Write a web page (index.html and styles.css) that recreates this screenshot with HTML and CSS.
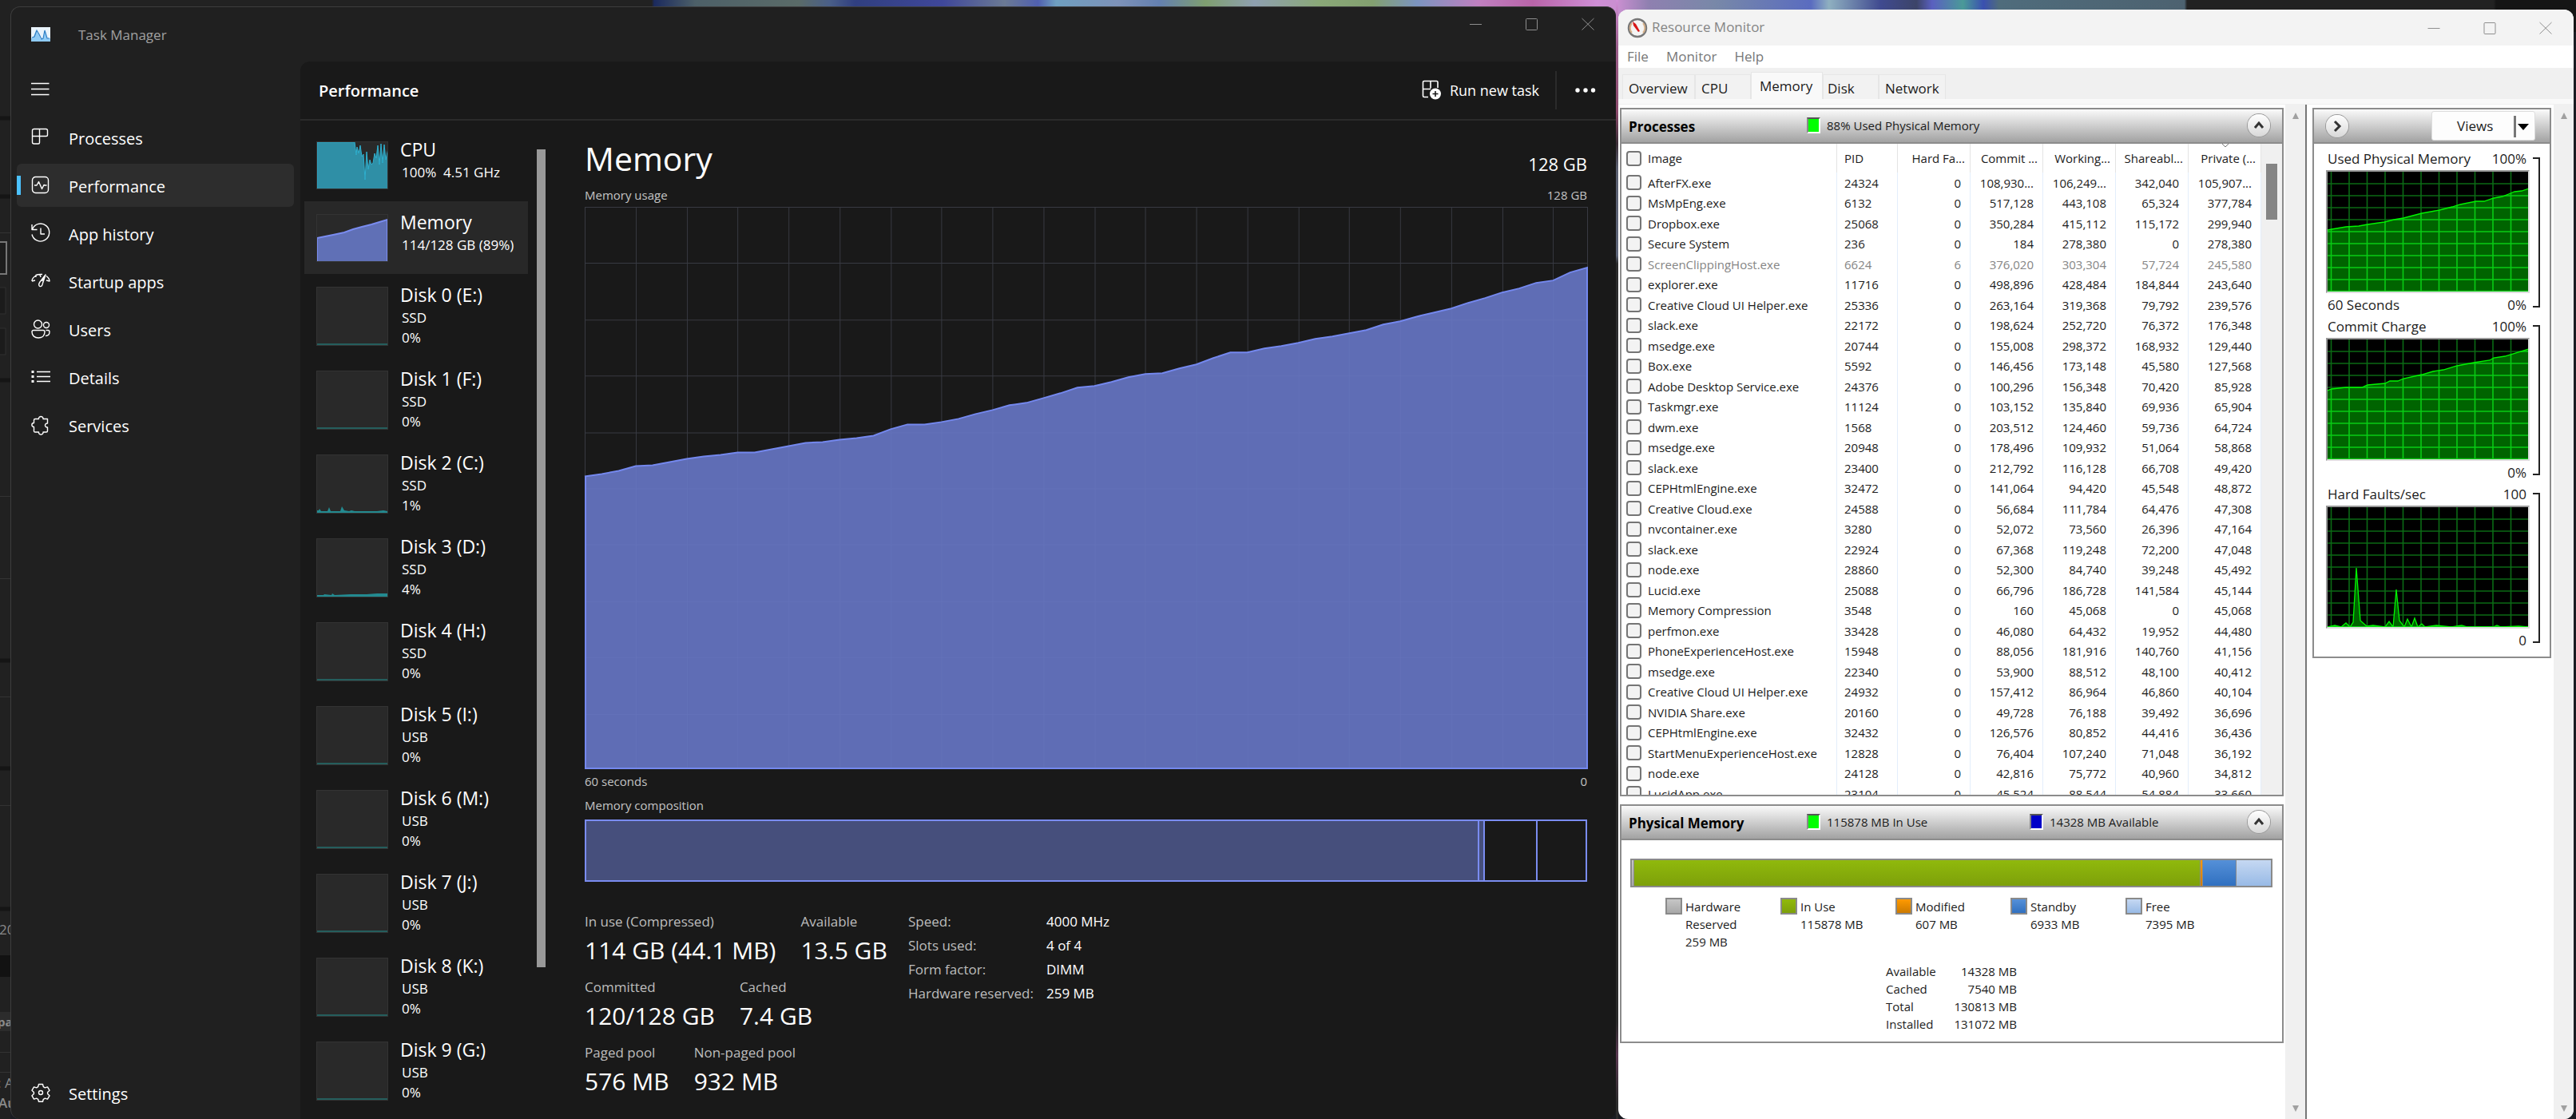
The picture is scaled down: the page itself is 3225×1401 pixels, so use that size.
FILE: index.html
```html
<!DOCTYPE html>
<html lang="en">
<head>
<meta charset="utf-8">
<title>Task Manager and Resource Monitor</title>
<link rel="stylesheet" href="styles.css">
</head>
<body>
<div class="desktop">
  <div class="behind" aria-hidden="true">
    <svg class="behind-art" width="15" height="1401" viewBox="0 0 15 1401">
      <rect width="15" height="1401" fill="#212121"/>
      <path d="M0 148h15M0 246h15M0 476h15M0 827h15M0 962h15M0 1138h15" stroke="#151515" stroke-width="5"/>
      <rect y="1196" width="15" height="27" fill="#121212"/>
      <rect y="1267" width="15" height="24" fill="#2c2c2c"/>
      <path d="M0 291.500h15M0 621.500h15M0 724.500h15M0 872.500h15M0 1008.500h15M0 1317.500h15M0 1342.500h15" stroke="#333"/>
      <path d="M-2 303h10v40H-2z" fill="#1d1d1d" stroke="#777" stroke-width="2"/>
      <path d="M-2 360h9v33h-9zM-2 411h9v33h-9z" fill="#1b1b1b" stroke="#303030"/>
      <g fill="#8a8a8a" font-family="Open Sans, sans-serif" font-size="17">
        <text x="-1" y="1170">20</text>
        <text x="-3" y="1285" font-weight="700" font-size="15">pa</text>
        <text x="-3" y="1362">: A</text>
        <text x="-2" y="1387" font-weight="600">Au</text>
      </g>
    </svg>
  </div>

  <section class="taskmgr" aria-label="Task Manager">
    <header class="tm-titlebar">
      <svg class="tm-logo" width="24" height="18" viewBox="0 0 24 18"><rect width="24" height="18" fill="#e9f3fb"/><path d="M0 14l3-2 3-8 4 6 2 5 3-1 2-10 3 10 4 0v4H0z" fill="#8fcbf5"/><path d="M1 13l3-1 3-8 3 5 3 6 2-1 2-10 3 10 3 0" fill="none" stroke="#2f7fc4" stroke-width="1.200"/></svg>
      <span class="tm-title">Task Manager</span>
      <div class="tm-controls">
        <button aria-label="Minimize"><svg width="16" height="16" viewBox="0 0 16 16"><path d="M0 8.500h15"/></svg></button>
        <button aria-label="Maximize"><svg width="16" height="16" viewBox="0 0 16 16"><rect x=".5" y="1.500" width="14" height="14" rx="1"/></svg></button>
        <button aria-label="Close"><svg width="16" height="16" viewBox="0 0 16 16"><path d="M.5 1l15 14.500M15.500 1l-15 14.500"/></svg></button>
      </div>
    </header>

    <nav class="tm-nav">
      <button class="nav-item" aria-label="Open navigation"><svg viewBox="0 0 24 24"><path d="M0 4.500h22.500M0 11.500h22.500M0 18.500h22.500"/></svg></button>
      <button class="nav-item"><svg viewBox="0 0 24 24"><path d="M3.500 1.500h15a2 2 0 0 1 2 2v5.500a1.500 1.500 0 0 1-1.500 1.500H1.500M3.500 1.500a2 2 0 0 0-2 2V18a2 2 0 0 0 2 2H9a1.500 1.500 0 0 0 1.500-1.500v-17"/></svg>Processes</button>
      <button class="nav-item selected"><svg viewBox="0 0 24 24"><rect x="1.500" y="1.500" width="20" height="20" rx="4"/><path d="M4 12h3l2.500-4.500 4 9 2.500-5 1 .5h2.500"/></svg>Performance</button>
      <button class="nav-item"><svg viewBox="0 0 24 24"><path d="M1 1v6.500h6.500M1.500 7A11 11 0 1 1 1 13.500M12 5.500V13h5"/></svg>App history</button>
      <button class="nav-item"><svg viewBox="0 0 24 24"><path d="M1 12c0-3 2.500-5.500 5-7M6 7V4.500C9 3 12 3.500 14 3.500M1 12l4-1M19 5.500c2 1.500 4 3.500 4 6.500l-4-1M18 4l-4.500 8M18 4l-7 9c-2 3-1.500 5 0 5.500 2 .5 3-1 3.500-4L18 4zM11 4l1 3"/></svg>Startup apps</button>
      <button class="nav-item"><svg viewBox="0 0 24 24"><circle cx="8.500" cy="6" r="5"/><circle cx="19" cy="7" r="3.500"/><path d="M3 13.500h12a2 2 0 0 1 2 2c0 5-3.500 7.500-8 7.500S1 20.500 1 15.500a2 2 0 0 1 2-2zM18.500 13.500H21a2 2 0 0 1 2 2c0 3-1.500 5-5 5"/></svg>Users</button>
      <button class="nav-item"><svg viewBox="0 0 24 24"><path d="M7 5.500h17M7 11.500h17M7 17.500h17"/><path d="M.5 5.500h3M.5 11.500h3M.5 17.500h3" stroke-width="3"/></svg>Details</button>
      <button class="nav-item"><svg viewBox="0 0 24 24"><path d="M5 4.500h4.500c-.5-4 6-4 5.500 0h5.500v5.500c-4-.5-4 5.500 0 5v4.500a1.500 1.500 0 0 1-1.500 1.500H15c.5 4-6 4-5.500 0H5A1.500 1.500 0 0 1 3.500 19v-4.500c-3.500 0-3.500-5 0-5V6A1.500 1.500 0 0 1 5 4.500z"/></svg>Services</button>
      <button class="nav-item settings"><svg viewBox="0 0 24 24"><circle cx="12" cy="12" r="2.500"/><path d="M9.500 1.500h5l.8 3.200 2 1.200 3.200-1 2.500 4.300-2.400 2.200v2.200l2.400 2.200-2.500 4.300-3.200-1-2 1.200-.8 3h-5l-.8-3-2-1.200-3.200 1L1 15.800l2.400-2.200v-2.200L1 9.200l2.500-4.300 3.200 1 2-1.200z"/></svg>Settings</button>
    </nav>

    <main class="tm-main">
      <header class="tm-header">
        <h1>Performance</h1>
        <button class="run-task"><svg width="26" height="26" viewBox="0 0 26 26"><path d="M8 21.500H3A1.500 1.500 0 0 1 1.500 20V3A1.500 1.500 0 0 1 3 1.500h15.500A1.500 1.500 0 0 1 20 3v7M1.500 11.500H11M11 1.500v9" fill="none" stroke="#fff" stroke-width="1.600"/><circle cx="17" cy="17.500" r="7" fill="#fff"/><path d="M17 14v7M13.500 17.500h7" stroke="#191919" stroke-width="1.600"/></svg>Run new task</button>
        <button class="more" aria-label="More options"><svg width="26" height="8" viewBox="0 0 26 8" fill="#fff"><circle cx="3" cy="4" r="2.700"/><circle cx="13" cy="4" r="2.700"/><circle cx="22.500" cy="4" r="2.700"/></svg></button>
      </header>
      <div class="tm-body">
        <div class="device-scroll">
          <ul class="devices" id="devices"></ul>
          <div class="device-track"><div class="device-thumb"></div></div>
        </div>
        <section class="detail">
          <div class="detail-title"><h2>Memory</h2><span>128 GB</span></div>
          <div class="caption caption-top"><span>Memory usage</span><span>128 GB</span></div>
          <svg class="usage" id="usage" viewBox="0 0 1254 703" preserveAspectRatio="none" role="img" aria-label="Memory usage"></svg>
          <div class="caption caption-time"><span>60 seconds</span><span>0</span></div>
          <div class="caption caption-comp"><span>Memory composition</span></div>
          <div class="composition">
            <div class="used" style="width:89.400%"></div>
            <div class="used" style="width:0.500%"></div>
            <div style="width:5.300%"></div>
            <div class="free"></div>
          </div>
          <div class="stats">
            <div class="stat-left">
              <dl class="stat-row"><div><dt>In use (Compressed)</dt><dd>114 GB (44.1 MB)</dd></div><div><dt>Available</dt><dd>13.5 GB</dd></div></dl>
              <dl class="stat-row"><div><dt>Committed</dt><dd>120/128 GB</dd></div><div><dt>Cached</dt><dd>7.4 GB</dd></div></dl>
              <dl class="stat-row"><div><dt>Paged pool</dt><dd>576 MB</dd></div><div><dt>Non-paged pool</dt><dd>932 MB</dd></div></dl>
            </div>
            <dl class="specs">
              <dt>Speed:</dt><dd>4000 MHz</dd>
              <dt>Slots used:</dt><dd>4 of 4</dd>
              <dt>Form factor:</dt><dd>DIMM</dd>
              <dt>Hardware reserved:</dt><dd>259 MB</dd>
            </dl>
          </div>
        </section>
      </div>
    </main>
  </section>

  <div class="gap" aria-hidden="true"></div>

  <section class="resmon" aria-label="Resource Monitor">
    <header class="rm-titlebar">
      <svg width="26" height="26" viewBox="0 0 26 26"><circle cx="13" cy="13" r="11" fill="#f4f4f4" stroke="#777" stroke-width="2.500"/><path d="M6 7a9 9 0 0 0 0 12M20 7a9 9 0 0 1 0 12" fill="none" stroke="#d9b38c" stroke-width="2"/><path d="M7 5l4 3 5 9-2 1-6-8z" fill="#d81818"/></svg>
      <span class="rm-title">Resource Monitor</span>
      <div class="rm-controls">
        <button aria-label="Minimize"><svg width="16" height="16" viewBox="0 0 16 16"><path d="M.5 8.500h15"/></svg></button>
        <button aria-label="Maximize"><svg width="16" height="16" viewBox="0 0 16 16"><rect x="1" y="1.500" width="14" height="14" rx="1"/></svg></button>
        <button aria-label="Close"><svg width="16" height="16" viewBox="0 0 16 16"><path d="M.5 1l15 14.500M15.500 1l-15 14.500"/></svg></button>
      </div>
    </header>
    <div class="rm-menu"><button>File</button><button>Monitor</button><button>Help</button></div>
    <div class="rm-tabs" role="tablist">
      <button role="tab" class="tab tab-overview">Overview</button>
      <button role="tab" class="tab tab-cpu">CPU</button>
      <button role="tab" class="tab tab-memory" aria-selected="true">Memory</button>
      <button role="tab" class="tab tab-disk">Disk</button>
      <button role="tab" class="tab tab-network">Network</button>
    </div>
    <div class="rm-strip"></div>
    <div class="rm-body">
      <div class="rm-left">
        <section class="panel processes">
          <header class="panel-head">
            <h2>Processes</h2>
            <span class="meter"><i class="box green"></i>88% Used Physical Memory</span>
            <button class="round" aria-label="Collapse"><svg width="28" height="28" viewBox="0 0 28 28"><path d="M9 17l5-6 5 6"/></svg></button>
          </header>
          <div class="table-wrap">
            <table>
              <colgroup><col><col class="w-pid"><col class="w-num"><col class="w-num"><col class="w-num"><col class="w-num"><col class="w-num"></colgroup>
              <thead><tr><th><label><input type="checkbox">Image</label></th><th>PID</th><th>Hard Fa...</th><th>Commit ...</th><th>Working...</th><th>Shareabl...</th><th>Private (...<svg class="sort" width="10" height="5" viewBox="0 0 10 5"><path d="M1 0l4 4 4-4" fill="none" stroke="#777"/></svg></th></tr></thead>
              <tbody id="rows"></tbody>
            </table>
            <div class="table-track"><div class="table-thumb"></div></div>
          </div>
        </section>
        <section class="panel physical">
          <header class="panel-head">
            <h2>Physical Memory</h2>
            <span class="meter"><i class="box green"></i>115878 MB In Use</span>
            <span class="meter meter-2"><i class="box blue"></i>14328 MB Available</span>
            <button class="round" aria-label="Collapse"><svg width="28" height="28" viewBox="0 0 28 28"><path d="M9 17l5-6 5 6"/></svg></button>
          </header>
          <div class="memory-bar">
            <div class="hw" style="width:0.200%"></div><div class="inuse" style="width:88.700%"></div><div class="modified" style="width:0.400%"></div><div class="standby" style="width:5.200%"></div><div class="free-mem"></div>
          </div>
          <ul class="legend">
            <li><i class="hw"></i><span>Hardware<br>Reserved<br>259 MB</span></li>
            <li><i class="inuse"></i><span>In Use<br>115878 MB</span></li>
            <li><i class="modified"></i><span>Modified<br>607 MB</span></li>
            <li><i class="standby"></i><span>Standby<br>6933 MB</span></li>
            <li><i class="free-mem"></i><span>Free<br>7395 MB</span></li>
          </ul>
          <dl class="summary">
            <dt>Available</dt><dd>14328 MB</dd>
            <dt>Cached</dt><dd>7540 MB</dd>
            <dt>Total</dt><dd>130813 MB</dd>
            <dt>Installed</dt><dd>131072 MB</dd>
          </dl>
        </section>
      </div>
      <div class="scrollbar"><svg viewBox="0 0 10 8"><path d="M5 0l4 8H1z"/></svg><svg viewBox="0 0 10 8"><path d="M5 8L1 0h8z"/></svg></div>
      <aside class="rm-right">
        <section class="panel">
          <header class="panel-head side-head">
            <button class="round" aria-label="Hide graphs"><svg width="28" height="28" viewBox="0 0 28 28"><path d="M11 8l6 6-6 6"/></svg></button>
            <button class="views"><span>Views</span><svg width="24" height="28" viewBox="0 0 24 28"><path d="M2.500 1v27" stroke="#777" stroke-width="3"/><path d="M6 11h14l-7 8z" fill="#000"/></svg></button>
          </header>
          <div class="graphs" id="graphs"></div>
        </section>
      </aside>
      <div class="scrollbar"><svg viewBox="0 0 10 8"><path d="M5 0l4 8H1z"/></svg><svg viewBox="0 0 10 8"><path d="M5 8L1 0h8z"/></svg></div>
    </div>
  </section>
</div>
<script src="app.js"></script>
</body>
</html>
```
FILE: styles.css
```css
* { box-sizing: border-box; margin: 0; padding: 0; }
body { font-family: "Open Sans", "Noto Sans", sans-serif; background: #1c1c1c; }
button { font: inherit; color: inherit; background: none; border: 0; }
ul { list-style: none; }

.desktop {
  display: grid;
  grid-template-columns: 13px 2010fr 3px 1196fr;
  min-height: 100vh;
  padding-right: 3px;
  background:
    linear-gradient(90deg, #222 25.3%, #1b2a5e 25.4%, #4d6068 27%, #5a6b68 31%, #4a5f88 32.2%, #303f80 33.2%, #3f479a 36.6%, #6b7a94 39%, #5060b0 40.3%, #6f9fc0 41%, #7d92b8 43.4%, #6480b0 45%, #7f9f70 46.8%, #8fa0b0 48.7%, #8aa878 51.2%, #83a070 53.3%, #7c95c0 55%, #c080c0 57.4%, #b864a8 59.5%, #cf8fd6 62%, #c98fd0 62.8%, #8f80b0 64%, #7888a8 66.6%, #5a6cc0 70.3%, #8fb0c0 71%, #404a90 73%, #3c4468 74.400%, #5a60c0 75%, #4a9a98 76.2%, #3a50b0 77%, #4f6c7c 77.6%, #4d6270 84.8%, #222 84.9%, #222 96.8%, #151515 96.9%) top / 100% 40px no-repeat,
    #1a1c22;
}
.behind { overflow: hidden; }
.behind-art { display: block; }
.gap { background: linear-gradient(#cf8fd6 0, #9c5f8c 60px, #8b4a6c 140px, #3c2f38 180px, #5a5f70 210px, #5c6478 320px, #2c2c2c 330px, #3a3d48 900px, #2c2c2c 970px, #2c2c2c 1280px, #5a3a52 1320px, #2c2c2c 1380px); }

/* Task Manager */
.taskmgr {
  display: grid;
  grid-template: 68px 1fr / 362px 1fr;
  margin-top: 8px;
  border: 1px solid #3d3d3d;
  border-right: 0;
  border-bottom: 0;
  border-radius: 12px;
  background: #202020;
  color: #fff;
  overflow: hidden;
}
.tm-titlebar { grid-column: 1 / -1; display: flex; align-items: center; padding-left: 25px; }
.tm-title { margin-left: 35px; font-size: 17px; color: #a0a0a0; }
.tm-controls { display: flex; align-self: flex-start; margin-left: auto; }
.tm-controls button { width: 70px; height: 41px; display: grid; place-items: center; }
.tm-controls svg, .rm-controls svg { fill: none; stroke: #8f8f8f; stroke-width: 1; }

.tm-nav { display: flex; flex-direction: column; gap: 6px; padding: 8px 8px 6px 7px; }
.nav-item { display: flex; align-items: center; gap: 23px; height: 54px; padding: 3px 18px 0; border-radius: 6px; font-size: 20px; text-align: left; }
.nav-item svg { flex: none; width: 24px; height: 24px; margin-bottom: 3px; fill: none; stroke: #fff; stroke-width: 1.4; stroke-linejoin: round; overflow: visible; }
.nav-item.selected { background: linear-gradient(#4cc2ff, #4cc2ff) left center / 5px 24px no-repeat, #2d2d2d; }
.nav-item.settings { margin-top: auto; }

.tm-main { display: flex; flex-direction: column; background: #191919; border-top-left-radius: 12px; }
.tm-header { display: flex; align-items: center; height: 74px; padding-left: 23px; border-bottom: 2px solid #2b2b2b; font-size: 18px; }
.tm-header h1 { font-size: 20px; font-weight: 600; margin-right: auto; }
.run-task { display: flex; align-items: center; gap: 9px; height: 48px; padding-right: 20px; border-right: 2px solid #2b2b2b; }
.more { padding: 0 25px 0 23px; display: flex; }

.tm-body { flex: 1; display: flex; }
.device-scroll { flex: none; display: flex; width: 316px; padding-left: 5px; }
.devices { width: 280px; padding-top: 10px; }
.device { display: flex; gap: 15px; height: 105px; padding: 10px 0 0 15px; }
.device.short { height: 91px; }
.device.selected { background: #282828; }
.device svg { flex: none; margin-top: 6px; width: 90px; height: 74px; border: 1px solid #333; background: #292929; }
.device.short svg { height: 60px; }
.device p { font-size: 17px; line-height: 25px; padding-left: 2px; white-space: nowrap; }
.device .name { font-size: 23px; line-height: 32px; padding-left: 0; }
.device-track { margin-left: 3px; width: 28px; padding: 36px 8px 0; }
.device-thumb { width: 11px; height: 1024px; background: #999; }

.detail { flex: 1; display: flex; flex-direction: column; min-width: 0; padding: 17px 36px 23px 40px; }
.detail-title { display: flex; justify-content: space-between; line-height: 60px; }
.detail-title h2 { font-size: 41px; font-weight: 400; }
.detail-title span { font-size: 22px; padding-top: 7px; line-height: 60px; height: 60px; }
.caption { display: flex; justify-content: space-between; font-size: 15px; line-height: 24px; color: #c4c4c4; }
.caption-top { margin: 4px 0 3px; }
.caption-time { margin-top: 3px; }
.caption-comp { margin: 6px 0; }
.usage { flex: 1 1 0; min-height: 300px; width: 100%; overflow: visible; }
.composition { display: flex; height: 78px; border: 2px solid #7a8cf0; }
.composition div { border-right: 2px solid #7a8cf0; }
.composition .used { background: #464f7c; }
.composition .free { flex: 1; border: 0; }
.stats { display: flex; margin-top: 38px; }
.stat-left { width: 405px; display: flex; flex-direction: column; gap: 10px; }
.stat-row { display: flex; gap: 31px; white-space: nowrap; }
.stat-row dt { font-size: 17px; line-height: 24px; color: #bdbdbd; }
.stat-row dd { font-size: 30px; line-height: 48px; }
.specs { display: grid; grid-template-columns: 173px auto; font-size: 17px; line-height: 30px; align-content: start; margin-top: -3px; white-space: nowrap; }
.specs dt { color: #bdbdbd; }

/* Resource Monitor */
.resmon { display: flex; flex-direction: column; margin-top: 12px; background: #fff; border-radius: 12px; overflow: hidden; font-size: 15px; color: #1c1c1c; }
.rm-titlebar { display: flex; align-items: center; height: 45px; padding-left: 11px; background: #f3f3f3; font-size: 17px; color: #858585; }
.rm-title { margin-left: 5px; padding-bottom: 2px; }
.rm-controls { display: flex; margin-left: auto; }
.rm-controls button { width: 70px; height: 42px; display: grid; place-items: center; }
.rm-menu { display: flex; gap: 22px; height: 28px; padding-left: 11px; font-size: 17px; line-height: 28px; color: #777; }
.rm-tabs { display: flex; align-items: flex-end; height: 39px; padding-left: 5px; background: #f0f0f0; font-size: 17px; }
.tab { height: 31px; padding: 3px 0 0 7px; text-align: left; background: #f2f2f2; border: 1px solid #e6e6e6; border-bottom: 0; }
.tab[aria-selected] { height: 34px; padding: 0 0 0 10px; background: #f9f9f9; }
.tab-overview { width: 91px; }
.tab-cpu { width: 70px; }
.tab-memory { width: 90px; }
.tab-disk { width: 70px; padding-left: 5px; }
.tab-network { width: 84px; padding-left: 7px; }
.rm-strip { height: 7px; background: #f9f9f9; border-bottom: 1px solid #f0f0f0; }

.rm-body { flex: 1; display: flex; }
.rm-left { flex: 1; min-width: 0; padding: 4px 2px 0; }
.rm-right { width: 311px; padding: 4px 3px 0 7px; border-left: 2px solid #777; }
.panel { border: 2px solid #8c8c8c; background: #fff; overflow: hidden; }
.panel-head { display: grid; grid-template-columns: 223px 279px 1fr auto; align-items: center; height: 43px; padding: 0 15px 2px 9px; border-bottom: 2px solid #8c8c8c; background: linear-gradient(#fafafa, #a2a2a2); }
.panel-head h2 { font-size: 17px; font-weight: 700; padding-top: 4px; color: #000; }
.panel-head .round { grid-column: 4; }
.meter { display: flex; align-items: center; gap: 8px; white-space: nowrap; }
.box { width: 17px; height: 20px; border: 2px solid #fff; border-top-color: #555; border-left-color: #888; }
.green { background: #0f0; }
.blue { background: #0000c8; }
.round { width: 28px; height: 28px; border-radius: 50%; background: linear-gradient(#fff, #d8d8d8); box-shadow: 0 0 0 1px #999; }
.round svg { display: block; fill: none; stroke: #333; stroke-width: 3; }

.processes { height: 862px; margin-bottom: 10px; }
.table-wrap { display: flex; }
table { flex: 1; width: 0; table-layout: fixed; border-collapse: separate; border-spacing: 0; }
.w-pid { width: 76px; }
.w-num { width: 91px; }
th { height: 36px; font-weight: 400; text-align: right; padding-right: 6px; border-right: 1px solid #e4e4e4; white-space: nowrap; line-height: 24px; position: relative; }
.sort { position: absolute; top: 0; left: 41px; }
td { height: 25px; line-height: 24px; text-align: right; padding-right: 11px; border-right: 1px solid #e3eefb; white-space: nowrap; }
tr:nth-child(even) td { height: 26px; }
th:first-child, td:first-child { text-align: left; padding: 0 0 0 6px; }
th:nth-child(2), td:nth-child(2) { text-align: left; padding: 0 0 0 9px; }
td label, th label { display: flex; align-items: center; gap: 8px; }
td input, th input { appearance: none; flex: none; width: 19px; height: 19px; border: 2px solid #757575; border-radius: 4px; background: #f3f3f3; }
.ended td { color: #858585; }
.table-track { width: 26px; background: #f0f0f0; padding: 25px 6px 0; }
.table-thumb { width: 14px; height: 70px; background: #858585; }

.memory-bar { display: flex; height: 36px; margin: 23px 12px 13px 11px; border: 2px solid #8a8a8a; }
.memory-bar div + div { border-left: 1px solid #8a8a8a; }
.memory-bar .free-mem { flex: 1; }
.hw { background: linear-gradient(#c6c6c6, #a8a8a8); }
.inuse { background: linear-gradient(#90b90c, #7da00a); }
.modified { background: linear-gradient(#ff9a00, #cc7a00); }
.standby { background: linear-gradient(#5590d8, #3070c0); }
.free-mem { background: linear-gradient(#c5d8f2, #98bae6); }
.legend { display: flex; padding-left: 55px; line-height: 22px; height: 67px; }
.legend li { display: flex; gap: 4px; width: 144px; }
.legend i { flex: none; width: 21px; height: 21px; border: 2px solid #8a8a8a; }
.summary { display: grid; grid-template-columns: 74px 90px; width: 164px; margin: 14px auto 11px 331px; line-height: 22px; white-space: nowrap; }
.summary dd { text-align: right; }

.scrollbar { display: flex; flex-direction: column; justify-content: space-between; align-items: center; width: 25px; padding: 10px 0 9px; background: #f0f0f0; }
.scrollbar svg { width: 10px; height: 8px; fill: #a0a0a0; }

.side-head { display: flex; justify-content: space-between; padding: 0 18px 0 15px; }
.views { display: flex; align-items: center; justify-content: space-between; width: 130px; height: 37px; padding: 0 3px 0 31px; background: #fdfdfd; border: 1px solid #ddd; border-radius: 3px; font-size: 17px; }
.graphs { padding: 7px 12px 8px 15px; display: flex; flex-direction: column; gap: 3px; font-size: 17px; line-height: 24px; }
.graph { display: grid; grid-template-columns: 1fr 9px; column-gap: 4px; }
.graph-row { display: flex; justify-content: space-between; height: 24px; padding: 0 4px 0 2px; white-space: nowrap; }
.plot { display: block; width: 100%; height: 154px; margin: 2px 0 3px; background: #000; border: 2px solid #ddd; border-top-color: #999; border-left-color: #999; }
.bracket { height: 188px; margin-top: 10px; border: 2px solid #222; border-left: 0; }
```
FILE: app.js
```js
// Left-hand device list
const cpuShape = 'M0 0H47L49 16 50 6 52 14 54 4 56 18 58 15 60 47 62 12 64 34 66 22 68 28 70 26 72 14 74 20 76 4 78 28 80 2 82 26 84 3 86 22 90 3V60H0Z';
const memoryShape = 'M0 29L10 27 20 25 34 22 45 18 56 15 68 12 78 9 88 6V60H0Z';
const devices = [
  ['CPU', '100%&nbsp; 4.51 GHz', '', `<path d="${cpuShape}" fill="#2f8fa6" stroke="#2fb0cf"/>`],
  ['Memory', '114/128 GB (89%)', '', `<path d="${memoryShape}" fill="#6070b6" stroke="#7a8cf0" stroke-width="2"/>`],
  ['Disk 0 (E:)', 'SSD', '0%'], ['Disk 1 (F:)', 'SSD', '0%'],
  ['Disk 2 (C:)', 'SSD', '1%', '<path d="M0 72v-3h2l1-2 2 3 8 0 2-5 2 5h12l2-6 3 5 6 1 3-1 4 1h16l12 0 8-1 5 1v2z" fill="#238a90"/>'],
  ['Disk 3 (D:)', 'SSD', '4%', '<path d="M0 72v-2l8 0 1-1 9 1 1-2 3 2 20-1 20 0 13-1 13 0v4z" fill="#238a90"/>'],
  ['Disk 4 (H:)', 'SSD', '0%'], ['Disk 5 (I:)', 'USB', '0%'], ['Disk 6 (M:)', 'USB', '0%'],
  ['Disk 7 (J:)', 'USB', '0%'], ['Disk 8 (K:)', 'USB', '0%'], ['Disk 9 (G:)', 'USB', '0%']
];
document.getElementById('devices').innerHTML = devices.map(([name, a, b, art], i) => {
  const short = i < 2;
  const h = short ? 58 : 72;
  return `<li class="device${short ? ' short' : ''}${i === 1 ? ' selected' : ''}"><svg viewBox="0 0 88 ${h}">${art || '<path d="M0 71h88" stroke="#25706f" stroke-width="1.5"/>'}</svg><div><p class="name">${name}</p><p>${a}</p>${b ? `<p>${b}</p>` : ''}</div></li>`;
}).join('');

// Memory usage over the last 60 seconds
const used = [366,369,373,379,380,384,388,391,393,396,396,400,404,408,409,412,414,417,425,431,431,434,438,444,449,455,458,464,470,477,479,484,490,494,495,501,506,514,521,521,526,529,533,538,541,545,549,556,560,566,571,576,583,589,596,601,608,611,621,627];
const W = 1254, H = 703;
const line = used.map((v, i) => `${(i * W / (used.length - 1)).toFixed(1)} ${H - v}`).join('L');
let grid = '';
for (let x = 0; x < W; x += 63.75) grid += `M${Math.round(x)}.5 0V${H}`;
for (let y = 0; y < 10; y++) grid += `M0 ${Math.round(y * 70.4)}.5H${W}`;
grid += `M${W}.5 0V${H}`;
document.getElementById('usage').innerHTML =
  `<path d="${grid}" stroke="#2e2e2e" fill="none"/><path d="M${line}V${H}H0Z" fill="#5f6db5"/>` +
  `<path d="${grid}" stroke="#8090d8" stroke-opacity=".12" fill="none"/>` +
  `<path d="M1 ${H - 1}V${H - used[0]}L${line}V${H - 1}Z" fill="none" stroke="#7488ee" stroke-width="2"/>`;

// Process table
const processes = `AfterFX.exe|24324|0|108,930...|106,249...|342,040|105,907...
MsMpEng.exe|6132|0|517,128|443,108|65,324|377,784
Dropbox.exe|25068|0|350,284|415,112|115,172|299,940
Secure System|236|0|184|278,380|0|278,380
ScreenClippingHost.exe|6624|6|376,020|303,304|57,724|245,580
explorer.exe|11716|0|498,896|428,484|184,844|243,640
Creative Cloud UI Helper.exe|25336|0|263,164|319,368|79,792|239,576
slack.exe|22172|0|198,624|252,720|76,372|176,348
msedge.exe|20744|0|155,008|298,372|168,932|129,440
Box.exe|5592|0|146,456|173,148|45,580|127,568
Adobe Desktop Service.exe|24376|0|100,296|156,348|70,420|85,928
Taskmgr.exe|11124|0|103,152|135,840|69,936|65,904
dwm.exe|1568|0|203,512|124,460|59,736|64,724
msedge.exe|20948|0|178,496|109,932|51,064|58,868
slack.exe|23400|0|212,792|116,128|66,708|49,420
CEPHtmlEngine.exe|32472|0|141,064|94,420|45,548|48,872
Creative Cloud.exe|24588|0|56,684|111,784|64,476|47,308
nvcontainer.exe|3280|0|52,072|73,560|26,396|47,164
slack.exe|22924|0|67,368|119,248|72,200|47,048
node.exe|28860|0|52,300|84,740|39,248|45,492
Lucid.exe|25088|0|66,796|186,728|141,584|45,144
Memory Compression|3548|0|160|45,068|0|45,068
perfmon.exe|33428|0|46,080|64,432|19,952|44,480
PhoneExperienceHost.exe|15948|0|88,056|181,916|140,760|41,156
msedge.exe|22340|0|53,900|88,512|48,100|40,412
Creative Cloud UI Helper.exe|24932|0|157,412|86,964|46,860|40,104
NVIDIA Share.exe|20160|0|49,728|76,188|39,492|36,696
CEPHtmlEngine.exe|32432|0|126,576|80,852|44,416|36,436
StartMenuExperienceHost.exe|12828|0|76,404|107,240|71,048|36,192
node.exe|24128|0|42,816|75,772|40,960|34,812
LucidApp.exe|23104|0|45,524|88,544|54,884|33,660`.split('\n').map(r => r.split('|'));
document.getElementById('rows').innerHTML = processes.map(([name, ...cells]) =>
  `<tr${name.startsWith('ScreenClip') ? ' class="ended"' : ''}><td><label><input type="checkbox">${name}</label></td>${cells.map(c => `<td>${c}</td>`).join('')}</tr>`).join('');

// Side graphs, 252 by 150 units
const graphs = [
  ['Used Physical Memory', '100%', '60 Seconds', '0%', '0 73L5 72 23 69 39 68 50 66 71 63 83 60 95 58 118 52 140 48 156 44 166 41 186 37 196 37 208 33 219 31 229 27 234 25 243 24 252 21'],
  ['Commit Charge', '100%', '', '0%', '0 64L5 62 23 60 43 60 50 57 72 55 78 52 88 52 95 49 118 44 132 40 145 38 162 33 183 29 203 26 208 23 222 21 252 12'],
  ['Hard Faults/sec', '100', '', '0', '0 150L9 148 17 150 23 145 28 150 32 144 36 76 41 142 49 149 57 148 72 150 77 143 82 150 86 103 90 142 96 150 100 140 105 150 109 139 113 150 118 146 122 150 136 148 145 149 155 150 168 148 175 150 207 150 212 148 217 150 239 149 252 150']
];
let cells = '';
for (let x = 4.5; x < 252; x += 22.5) cells += `M${x} 0V150`;
for (let y = 15; y < 150; y += 15) cells += `M0 ${y}H252`;
document.getElementById('graphs').innerHTML = graphs.map(([title, max, left, min, pts], i) =>
  `<div class="graph"><div><div class="graph-row"><span>${title}</span><span>${max}</span></div>
  <svg class="plot" viewBox="0 0 251 150" preserveAspectRatio="none"><clipPath id="area${i}"><path d="M${pts}V150H0Z"/></clipPath>
  <path d="${cells}" stroke="#0b6a15" stroke-width="1.6"/><path d="M${pts}V150H0Z" fill="#006400"/>
  ${i < 2 ? `<path d="${cells}M0 149.500H252" stroke="#08cc14" stroke-width="1.6" clip-path="url(#area${i})"/>` : '<path d="M0 149.500H252" stroke="#08cc14"/>'}
  <path d="M${pts}" fill="none" stroke="#00f500" stroke-width="1.3"/></svg>
  <div class="graph-row"><span>${left}</span><span>${min}</span></div></div><div class="bracket"></div></div>`).join('');
```
